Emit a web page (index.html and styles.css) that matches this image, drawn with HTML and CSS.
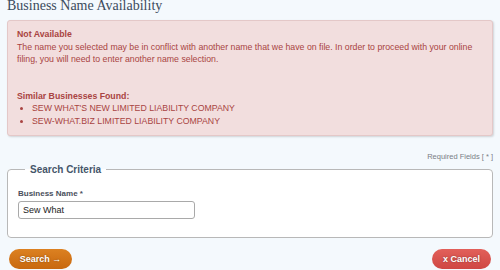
FILE: index.html
```html
<!DOCTYPE html>
<html lang="en">
<head>
    <meta charset="UTF-8">
    <meta name="viewport" content="width=device-width, initial-scale=1.0">
    <title>Business Name Availability</title>
    <link rel="stylesheet" href="styles.css">
</head>
<body>
    <h1 class="title">Business Name Availability</h1>

    <div class="alert">
        <p class="alert-head">Not Available</p>
        <p>The name you selected may be in conflict with another name that we have on file. In order to proceed with your online filing, you will need to enter another name selection.</p>
        <p class="alert-head similar">Similar Businesses Found:</p>
        <ul class="matches">
            <li>SEW WHAT'S NEW LIMITED LIABILITY COMPANY</li>
            <li>SEW-WHAT.BIZ LIMITED LIABILITY COMPANY</li>
        </ul>
    </div>

    <p class="required">Required Fields [ * ]</p>

    <fieldset class="criteria">
        <legend>Search Criteria</legend>
        <label for="bizname">Business Name *</label>
        <input type="text" id="bizname" value="Sew What">
    </fieldset>

    <div class="actions">
        <button class="btn search">Search &rarr;</button>
        <button class="btn cancel">x Cancel</button>
    </div>
</body>
</html>
```

FILE: styles.css
```css
html, body {
    margin: 0;
    padding: 0;
    background: #f4f9fd;
}

body {
    padding: 0 7px;
    font-family: "Liberation Sans", Arial, sans-serif;
    font-size: 8.75px;
    overflow: hidden;
    height: 270px;
}

.title {
    font-family: "Liberation Serif", Georgia, serif;
    font-weight: normal;
    font-size: 14px;
    color: #3b4b5c;
    margin: -2px 0 0 0;
    line-height: 16px;
}

.alert {
    margin-top: 6px;
    background: #f2dede;
    border: 1px solid #e4c8c8;
    border-radius: 3px;
    box-shadow: 1px 1px 2px rgba(0, 0, 0, 0.15);
    color: #a94442;
    padding: 7px 9px 8px;
    line-height: 12.5px;
}

.alert p {
    margin: 0;
}

.alert-head {
    font-weight: bold;
}

.similar {
    margin-top: 24px !important;
}

.matches {
    margin: 0;
    padding-left: 15px;
}

.required {
    margin: 16px 0 0 0;
    text-align: right;
    font-size: 7.5px;
    color: #7a7f86;
}

.criteria {
    margin: 3px 0 0 0;
    border: 1px solid #b8b8b8;
    border-radius: 4px;
    background: #fff;
    padding: 14px 10px 18px;
}

.criteria legend {
    font-weight: bold;
    font-size: 10px;
    color: #45566a;
    padding: 0 5px;
    margin-left: 7px;
}

.criteria label {
    display: block;
    font-weight: bold;
    font-size: 8px;
    color: #4a4f5c;
    margin-bottom: 3px;
}

.criteria input {
    width: 177px;
    height: 18px;
    box-sizing: border-box;
    border: 1px solid #a9a9a9;
    border-radius: 3px;
    font-family: "Liberation Sans", Arial, sans-serif;
    font-size: 9px;
    padding: 0 4px;
    color: #222;
}

.actions {
    display: flex;
    justify-content: space-between;
    margin-top: 11px;
    padding: 0 2px;
}

.btn {
    height: 20px;
    border: none;
    border-radius: 10px;
    color: #fff;
    font-family: "Liberation Sans", Arial, sans-serif;
    font-weight: bold;
    font-size: 9px;
    text-shadow: 0 0 2px rgba(0, 0, 0, 0.4);
    padding: 0;
}

.search {
    width: 63px;
    background: linear-gradient(#dc8121, #c8680f);
}

.cancel {
    width: 59px;
    background: linear-gradient(#e2605a, #cf4743);
}
```
